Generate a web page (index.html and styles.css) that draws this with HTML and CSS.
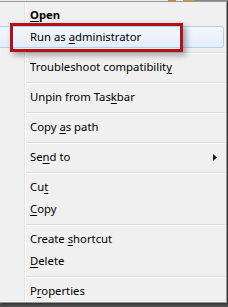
FILE: index.html
```html
<!DOCTYPE html>
<html>
<head>
<meta charset="utf-8">
<link rel="stylesheet" href="styles.css">
</head>
<body>
<div class="strip"></div>
<div class="menu">
  <div class="item bold"><span><u>O</u>pen</span></div>
  <div class="item hot"><span>Run as <u>a</u>dministrator</span></div>
  <div class="sep"></div>
  <div class="item"><span>Troubleshoot compatibilit<u>y</u></span></div>
  <div class="sep"></div>
  <div class="item"><span>Unpin from Tas<u>k</u>bar</span></div>
  <div class="sep"></div>
  <div class="item"><span>Copy <u>a</u>s path</span></div>
  <div class="sep"></div>
  <div class="item"><span>Se<u>n</u>d to</span><svg class="arrow" width="4" height="7" viewBox="0 0 4 7"><polygon points="0,0 4,3.5 0,7" fill="#1a1a1a"/></svg></div>
  <div class="sep"></div>
  <div class="item"><span>Cu<u>t</u></span></div>
  <div class="item"><span><u>C</u>opy</span></div>
  <div class="sep"></div>
  <div class="item"><span>Create <u>s</u>hortcut</span></div>
  <div class="item"><span><u>D</u>elete</span></div>
  <div class="sep"></div>
  <div class="item"><span>P<u>r</u>operties</span></div>
  <div class="callout"></div>
</div>
</body>
</html>
```
FILE: styles.css
```css
html, body {
  margin: 0;
  padding: 0;
}
body {
  width: 228px;
  height: 307px;
  overflow: hidden;
  background: #4e4e4e;
  font-family: "Noto Sans", "Open Sans", sans-serif;
  font-size: 11.3px;
  color: #000;
}
.strip {
  height: 1px;
  background: linear-gradient(to right, #f4f4f4 0, #f4f4f4 168px, #e58a2a 168px, #e58a2a 176px, #f4f4f4 176px, #f4f4f4 183px, #e9962e 183px, #e9962e 195px, #8a8a8a 195px, #8a8a8a 228px);
}
.menu {
  position: relative;
  width: 226px;
  border-top: 1px solid #979797;
  border-right: 1px solid #979797;
  border-bottom: 1px solid #979797;
  padding: 2px 0 0 0;
  background:
    linear-gradient(to right, transparent 24px, #e2e3e3 24px, #e2e3e3 25px, #ffffff 25px, #ffffff 26px, transparent 26px),
    #f0f0f0;
  box-shadow: 1px 1px 2px rgba(0, 0, 0, 0.45);
}
.item {
  display: flex;
  align-items: center;
  height: 22px;
  padding-left: 30px;
  line-height: 22px;
  white-space: nowrap;
}
.item u {
  text-decoration-thickness: 1px;
  text-underline-offset: 2px;
}
.bold {
  font-weight: bold;
}
.hot {
  box-sizing: border-box;
  margin: 0 2px 0 -3px;
  padding-left: 32px;
  border: 1px solid #aed0f3;
  border-radius: 3px;
  background: linear-gradient(to bottom, #f3f8fd, #e3edf9);
}
.sep {
  height: 8px;
  box-sizing: border-box;
  margin-left: 26px;
  padding-top: 4px;
}
.sep::before {
  content: "";
  display: block;
  height: 1px;
  background: #dcdcdc;
  border-bottom: 1px solid #ffffff;
}
.arrow {
  margin-left: auto;
  margin-right: 9px;
}
.callout {
  position: absolute;
  left: 10px;
  top: 21px;
  width: 167px;
  height: 23px;
  border: 3px solid #b3121b;
  box-shadow: 3px 3px 6px rgba(0, 0, 0, 0.35);
}
```
